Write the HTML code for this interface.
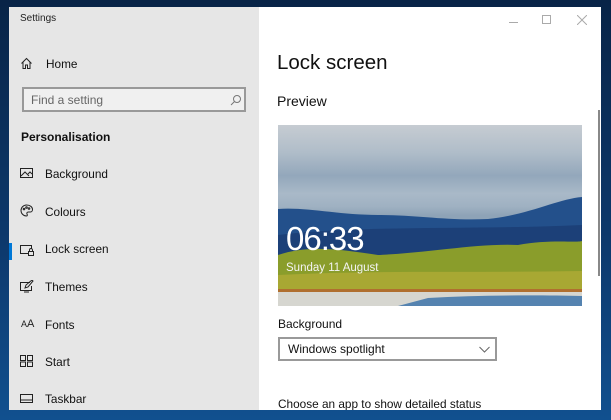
<!DOCTYPE html>
<html><head><meta charset="utf-8"><style>
*{margin:0;padding:0;box-sizing:border-box}
body{width:611px;height:420px;overflow:hidden;position:relative;font-family:"Liberation Sans",sans-serif;background:linear-gradient(180deg,#082447 0%,#0d3a6e 60%,#11508f 100%);}
#win{position:absolute;left:9px;top:7px;width:592px;height:403px;background:#fff;overflow:hidden}
#side{position:absolute;left:0;top:0;width:250px;height:403px;background:#e6e6e6}
.t{position:absolute;color:#000;white-space:nowrap}
.item{position:absolute;left:36px;font-size:11.8px;color:#111}
.ic{position:absolute;left:11px}
</style></head><body>
<div id="win">
<div id="side">
<div class="t" style="left:11px;top:6px;font-size:10px;color:#222">Settings</div>
<svg class="ic" style="top:50px" width="13" height="13" viewBox="0 0 13 13" fill="none" stroke="#222" stroke-width="1"><path d="M1.5 6.5L6.5 1.5L11.5 6.5M3 5v6.5h2.5v-3.5h2v3.5h2.5V5"/></svg>
<div class="item" style="top:50px;left:37px">Home</div>
<div style="position:absolute;left:13px;top:80px;width:224px;height:25px;border:2px solid #999;background:#f0f0f0"></div>
<div class="t" style="left:22px;top:86px;font-size:12px;color:#666">Find a setting</div>
<svg style="position:absolute;left:221px;top:87px" width="12" height="12" viewBox="0 0 12 12" fill="none" stroke="#777"><circle cx="7" cy="5" r="3.5"/><path d="M4.5 7.5L1 11"/></svg>
<div class="t" style="left:12px;top:123px;font-size:12px;font-weight:bold;color:#111">Personalisation</div>
<svg class="ic" style="top:160px" width="13" height="12" viewBox="0 0 13 12" fill="none" stroke="#222"><rect x="0.5" y="1.5" width="12" height="9"/><path d="M1 9l4-4 4 4M8 7l2-2 2 2"/></svg>
<div class="item" style="top:160px">Background</div>
<svg class="ic" style="top:197px" width="13" height="13" viewBox="0 0 13 13" fill="none" stroke="#222"><path d="M6.5 1a5.5 5.5 0 1 0 0 11c1 0 1-1 .5-2s0-2 1.5-2h2c1 0 2-1 2-2.5C12.5 3 10 1 6.5 1z"/><circle cx="4" cy="5" r=".8"/><circle cx="6.5" cy="3.5" r=".8"/><circle cx="9" cy="4.5" r=".8"/></svg>
<div class="item" style="top:198px">Colours</div>
<div style="position:absolute;left:0;top:236px;width:3px;height:17px;background:#0078d7"></div>
<svg class="ic" style="top:237px" width="14" height="12" viewBox="0 0 14 12" fill="none" stroke="#222"><path d="M8 9.5H.5v-8h11V5"/><rect x="8.5" y="7.5" width="5" height="4"/><path d="M9.5 7.5v-1.5a1.5 1.5 0 0 1 3 0v1.5"/></svg>
<div class="item" style="top:235px">Lock screen</div>
<svg class="ic" style="top:273px" width="14" height="13" viewBox="0 0 14 13" fill="none" stroke="#222"><path d="M10 2.5H.5v8h11V6M4 12h5"/><path d="M5 8l1-3 6-5 1 1-5 6z"/></svg>
<div class="item" style="top:273px">Themes</div>
<div class="t" style="left:12px;top:311px;font-size:9px;color:#222">A<span style="font-size:11px">A</span></div>
<div class="item" style="top:311px">Fonts</div>
<svg class="ic" style="top:348px" width="13" height="12" viewBox="0 0 13 12" fill="none" stroke="#222"><rect x=".5" y=".5" width="5" height="5"/><rect x="7.5" y=".5" width="5" height="5"/><rect x=".5" y="7" width="5" height="4.5"/><rect x="7.5" y="7" width="5" height="4.5"/></svg>
<div class="item" style="top:348px">Start</div>
<svg class="ic" style="top:387px" width="13" height="9" viewBox="0 0 13 9" fill="none" stroke="#222"><rect x=".5" y=".5" width="12" height="8"/><path d="M.5 6h12"/></svg>
<div class="item" style="top:385px">Taskbar</div>
</div>
<div style="position:absolute;left:500px;top:15px;width:9px;height:1px;background:#aaa"></div>
<div style="position:absolute;left:533px;top:8px;width:9px;height:9px;border:1px solid #aaa"></div>
<svg style="position:absolute;left:568px;top:8px" width="10" height="10" viewBox="0 0 10 10" stroke="#aaa"><path d="M0 0l10 10M10 0L0 10"/></svg>
<div class="t" style="left:268px;top:44px;font-size:20.5px;color:#111">Lock screen</div>
<div class="t" style="left:268px;top:86px;font-size:14px;color:#111">Preview</div>
<div style="position:absolute;left:589px;top:103px;width:2px;height:166px;background:#888"></div>
<div style="position:absolute;left:269px;top:118px;width:304px;height:181px;overflow:hidden;background:linear-gradient(180deg,#c6ccd2 0%,#b0bdc9 15%,#93a7bb 28%,#a9b9c8 38%,#9fb1c2 45%,#8ea3b7 50%)">
<svg width="304" height="181" style="position:absolute;left:0;top:0">
<path d="M0 84 C30 82 60 90 100 90 C140 90 170 96 210 94 C250 90 280 74 304 72 L304 181 L0 181Z" fill="#23508b"/>
<path d="M0 110 C80 100 200 105 304 100 L304 181 L0 181Z" fill="#1c4078"/>
<path d="M0 130 C30 120 60 124 100 130 C150 128 200 118 240 120 C270 114 300 118 304 116 L304 181 L0 181Z" fill="#8a9d2b"/>
<path d="M0 150 C100 145 200 148 304 146 L304 181 L0 181Z" fill="#a8a833"/>
<path d="M0 164h304v3H0z" fill="#b06f2f"/>
<path d="M0 167h304v14H0z" fill="#d6d6d0"/>
<path d="M150 173 C200 170 260 170 304 171 L304 181 L120 181Z" fill="#5583b0"/>
</svg>
<div class="t" style="left:8px;top:95px;font-size:33px;color:#fff;font-weight:300;letter-spacing:-1px">06:33</div>
<div class="t" style="left:8px;top:137px;font-size:11.5px;color:#f4f4f4">Sunday 11 August</div>
</div>
<div class="t" style="left:269px;top:310px;font-size:12px;color:#111">Background</div>
<div style="position:absolute;left:269px;top:330px;width:219px;height:24px;border:2px solid #999;background:#fff"></div>
<div class="t" style="left:279px;top:335px;font-size:12px;color:#111">Windows spotlight</div>
<svg style="position:absolute;left:470px;top:339px" width="11" height="7" viewBox="0 0 11 7" fill="none" stroke="#666"><path d="M.5 1l5 5 5-5"/></svg>
<div class="t" style="left:269px;top:390px;font-size:11.8px;color:#111">Choose an app to show detailed status</div>
</div>
</body></html>
